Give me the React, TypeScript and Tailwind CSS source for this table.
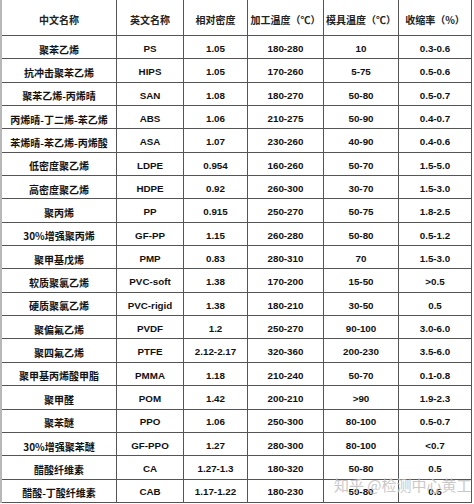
import React from 'react';

type Row = [string, string, string, string, string, string];

const headers = ['中文名称', '英文名称', '相对密度', '加工温度（℃）', '模具温度（℃）', '收缩率（%）'];

const rows: Row[] = [
  ['聚苯乙烯', 'PS', '1.05', '180-280', '10', '0.3-0.6'],
  ['抗冲击聚苯乙烯', 'HIPS', '1.05', '170-260', '5-75', '0.5-0.6'],
  ['聚苯乙烯-丙烯晴', 'SAN', '1.08', '180-270', '50-80', '0.5-0.7'],
  ['丙烯晴-丁二烯-苯乙烯', 'ABS', '1.06', '210-275', '50-90', '0.4-0.7'],
  ['苯烯晴-苯乙烯-丙烯酸', 'ASA', '1.07', '230-260', '40-90', '0.4-0.6'],
  ['低密度聚乙烯', 'LDPE', '0.954', '160-260', '50-70', '1.5-5.0'],
  ['高密度聚乙烯', 'HDPE', '0.92', '260-300', '30-70', '1.5-3.0'],
  ['聚丙烯', 'PP', '0.915', '250-270', '50-75', '1.8-2.5'],
  ['30%增强聚丙烯', 'GF-PP', '1.15', '260-280', '50-80', '0.5-1.2'],
  ['聚甲基戊烯', 'PMP', '0.83', '280-310', '70', '1.5-3.0'],
  ['软质聚氯乙烯', 'PVC-soft', '1.38', '170-200', '15-50', '>0.5'],
  ['硬质聚氯乙烯', 'PVC-rigid', '1.38', '180-210', '30-50', '0.5'],
  ['聚偏氟乙烯', 'PVDF', '1.2', '250-270', '90-100', '3.0-6.0'],
  ['聚四氟乙烯', 'PTFE', '2.12-2.17', '320-360', '200-230', '3.5-6.0'],
  ['聚甲基丙烯酸甲脂', 'PMMA', '1.18', '210-240', '50-70', '0.1-0.8'],
  ['聚甲醛', 'POM', '1.42', '200-210', '>90', '1.9-2.3'],
  ['聚苯醚', 'PPO', '1.06', '250-300', '80-100', '0.5-0.7'],
  ['30%增强聚苯醚', 'GF-PPO', '1.27', '280-300', '80-100', '<0.7'],
  ['醋酸纤维素', 'CA', '1.27-1.3', '180-320', '50-80', '0.5'],
  ['醋酸-丁酸纤维素', 'CAB', '1.17-1.22', '180-230', '50-80', '0.5'],
];

const cjk = "font-['Noto_Sans_CJK_SC',sans-serif]";
const latin = "font-['Liberation_Sans','Noto_Sans_CJK_SC',sans-serif]";

export default function App() {
  return (
    <div className="relative w-[474px] h-[504px] overflow-hidden bg-white">
      <div className="w-[473px] border-l-2 border-[#b8b8b8]">
        <div className="grid grid-cols-[115px_67px_64px_76px_75px_73px] grid-rows-[36px] auto-rows-[23.35px]">
          {headers.map((h) => (
            <div
              key={h}
              className={`flex items-center justify-center pt-[4px] border-r border-b border-[#555] text-[10px] font-semibold text-[#222] ${cjk}`}
            >
              {h}
            </div>
          ))}
          {rows.map((r) =>
            r.map((cell, i) => (
              <div
                key={r[1] + i}
                className={`flex items-center justify-center pt-[4px] border-r border-b border-[#555] text-[#111] ${
                  i === 0 ? `text-[10px] font-bold ${cjk}` : `text-[9.8px] font-bold ${latin}`
                }`}
              >
                {cell}
              </div>
            ))
          )}
        </div>
      </div>
      <div className={`absolute left-[334px] top-[477px] leading-none text-[15px] text-[#c4c4c4] opacity-90 ${cjk}`}>
        知乎 @检测中心黄工
      </div>
    </div>
  );
}
